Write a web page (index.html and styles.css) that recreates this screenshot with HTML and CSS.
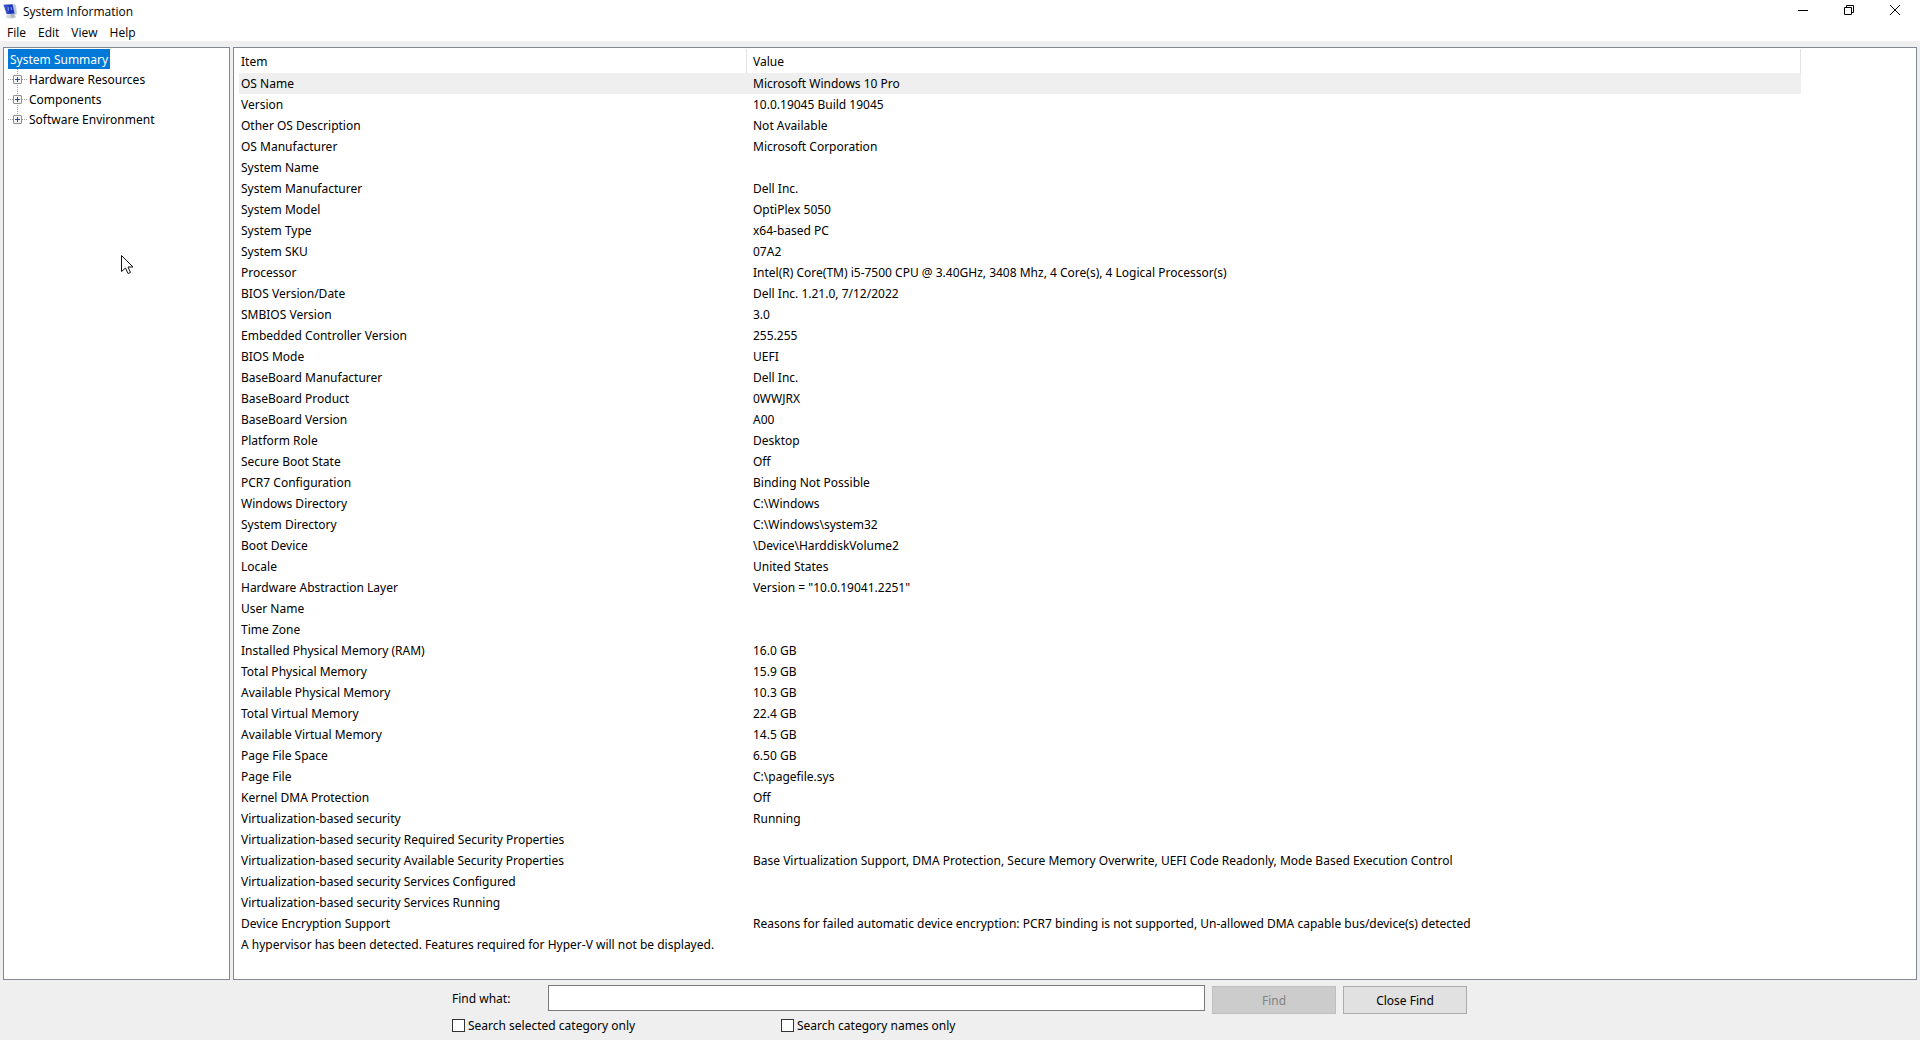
FILE: index.html
```html
<!DOCTYPE html>
<html lang="en">
<head>
  <meta charset="UTF-8" />
  <meta name="viewport" content="width=device-width, initial-scale=1" />
  <title>System Information</title>
  <link rel="stylesheet" href="styles.css">
</head>
<body>

<!-- Title bar -->
<header class="titlebar">
  <svg class="app-icon" width="16" height="18" viewBox="0 0 16 18" aria-hidden="true">
    <ellipse cx="9" cy="14.500" rx="5" ry="2" fill="#d4d7db"/>
    <path d="M8 11h4l1 4-4 1z" fill="#b4b9c0"/>
    <path d="M11 2l3 1 1 9-3 1z" fill="#c3c9d6"/>
    <path d="M1 2.500l10-.5 2.500 10-9 .5z" fill="#a9b6dc"/>
    <path d="M2 3l8.500-.5 2 9-7.500.5z" fill="#1c35b8"/>
    <path d="M2 3l3-.3 2 9-2 .3z" fill="#3450cc"/>
    <path d="M6 4.500l.5 4M9 5l.5 3" stroke="#93a8f0" fill="none"/>
  </svg>
  <h1>System Information</h1>
  <div class="window-buttons">
    <button aria-label="Minimize"><svg width="10" height="10"><path d="M0 5.5h10" stroke="#000"/></svg></button>
    <button aria-label="Restore"><svg width="10" height="10"><path d="M.5 2.5h7v7h-7zM2.5 2.5v-2h7v7h-2" fill="none" stroke="#000"/></svg></button>
    <button aria-label="Close"><svg width="10" height="10"><path d="M0 0l10 10M10 0l-10 10" stroke="#000"/></svg></button>
  </div>
</header>

<nav class="menubar">
  <button>File</button>
  <button>Edit</button>
  <button>View</button>
  <button>Help</button>
</nav>

<div class="panes">
  <!-- Category tree -->
  <aside class="tree">
    <a class="selected" href="#summary">System Summary</a>
    <ul>
      <li><button class="expand" aria-label="Expand Hardware Resources"></button><a href="#hardware">Hardware Resources</a></li>
      <li><button class="expand" aria-label="Expand Components"></button><a href="#components">Components</a></li>
      <li><button class="expand" aria-label="Expand Software Environment"></button><a href="#software">Software Environment</a></li>
    </ul>
  </aside>

  <!-- Details list -->
  <main class="details">
    <table>
      <colgroup><col class="col-item"><col class="col-value"></colgroup>
      <thead>
        <tr><th>Item</th><th>Value</th></tr>
      </thead>
      <tbody>
        <tr class="current"><td>OS Name</td><td>Microsoft Windows 10 Pro</td></tr>
        <tr><td>Version</td><td>10.0.19045 Build 19045</td></tr>
        <tr><td>Other OS Description</td><td>Not Available</td></tr>
        <tr><td>OS Manufacturer</td><td>Microsoft Corporation</td></tr>
        <tr><td>System Name</td><td></td></tr>
        <tr><td>System Manufacturer</td><td>Dell Inc.</td></tr>
        <tr><td>System Model</td><td>OptiPlex 5050</td></tr>
        <tr><td>System Type</td><td>x64-based PC</td></tr>
        <tr><td>System SKU</td><td>07A2</td></tr>
        <tr><td>Processor</td><td>Intel(R) Core(TM) i5-7500 CPU @ 3.40GHz, 3408 Mhz, 4 Core(s), 4 Logical Processor(s)</td></tr>
        <tr><td>BIOS Version/Date</td><td>Dell Inc. 1.21.0, 7/12/2022</td></tr>
        <tr><td>SMBIOS Version</td><td>3.0</td></tr>
        <tr><td>Embedded Controller Version</td><td>255.255</td></tr>
        <tr><td>BIOS Mode</td><td>UEFI</td></tr>
        <tr><td>BaseBoard Manufacturer</td><td>Dell Inc.</td></tr>
        <tr><td>BaseBoard Product</td><td>0WWJRX</td></tr>
        <tr><td>BaseBoard Version</td><td>A00</td></tr>
        <tr><td>Platform Role</td><td>Desktop</td></tr>
        <tr><td>Secure Boot State</td><td>Off</td></tr>
        <tr><td>PCR7 Configuration</td><td>Binding Not Possible</td></tr>
        <tr><td>Windows Directory</td><td>C:\Windows</td></tr>
        <tr><td>System Directory</td><td>C:\Windows\system32</td></tr>
        <tr><td>Boot Device</td><td>\Device\HarddiskVolume2</td></tr>
        <tr><td>Locale</td><td>United States</td></tr>
        <tr><td>Hardware Abstraction Layer</td><td>Version = "10.0.19041.2251"</td></tr>
        <tr><td>User Name</td><td></td></tr>
        <tr><td>Time Zone</td><td></td></tr>
        <tr><td>Installed Physical Memory (RAM)</td><td>16.0 GB</td></tr>
        <tr><td>Total Physical Memory</td><td>15.9 GB</td></tr>
        <tr><td>Available Physical Memory</td><td>10.3 GB</td></tr>
        <tr><td>Total Virtual Memory</td><td>22.4 GB</td></tr>
        <tr><td>Available Virtual Memory</td><td>14.5 GB</td></tr>
        <tr><td>Page File Space</td><td>6.50 GB</td></tr>
        <tr><td>Page File</td><td>C:\pagefile.sys</td></tr>
        <tr><td>Kernel DMA Protection</td><td>Off</td></tr>
        <tr><td>Virtualization-based security</td><td>Running</td></tr>
        <tr><td>Virtualization-based security Required Security Properties</td><td></td></tr>
        <tr><td>Virtualization-based security Available Security Properties</td><td>Base Virtualization Support, DMA Protection, Secure Memory Overwrite, UEFI Code Readonly, Mode Based Execution Control</td></tr>
        <tr><td>Virtualization-based security Services Configured</td><td></td></tr>
        <tr><td>Virtualization-based security Services Running</td><td></td></tr>
        <tr><td>Device Encryption Support</td><td>Reasons for failed automatic device encryption: PCR7 binding is not supported, Un-allowed DMA capable bus/device(s) detected</td></tr>
        <tr><td>A hypervisor has been detected. Features required for Hyper-V will not be displayed.</td><td></td></tr>
      </tbody>
    </table>
  </main>
</div>

<!-- Find bar -->
<form class="find">
  <div class="find-row">
    <label class="find-label" for="find-what">Find what:</label>
    <input type="text" id="find-what">
    <button type="button" disabled>Find</button>
    <button type="button">Close Find</button>
  </div>
  <div class="find-options">
    <label><input type="checkbox">Search selected category only</label>
    <label><input type="checkbox">Search category names only</label>
  </div>
</form>

<!-- Mouse pointer -->
<svg class="pointer" width="13" height="20" viewBox="0 0 13 20" aria-hidden="true">
  <path d="M.5.5v16l4-3.500 2.500 5.500 2.500-1-2.500-5.500h5z" fill="#fff" stroke="#111"/>
</svg>

</body>
</html>
```
FILE: styles.css
```css
* {
  box-sizing: border-box;
}

body {
  margin: 0;
  height: 100vh;
  display: flex;
  flex-direction: column;
  background: #efefef;
  color: #000;
  font-family: "Noto Sans", "Open Sans", sans-serif;
  font-size: 12px;
  overflow: hidden;
}

button,
input {
  font: inherit;
  color: inherit;
}

a {
  color: inherit;
  text-decoration: none;
}

.titlebar,
.menubar {
  display: flex;
  background: #fff;
  font-family: "Open Sans", sans-serif;
}

.titlebar {
  height: 24px;
  padding: 2px 2px 0;
}

.titlebar h1 {
  flex: 1;
  margin: 0 0 0 5px;
  font-size: 12px;
  font-weight: normal;
  line-height: 20px;
}

.window-buttons {
  display: flex;
}

.window-buttons button {
  display: flex;
  align-items: center;
  justify-content: center;
  width: 46px;
  height: 16px;
  padding: 0;
  border: none;
  background: none;
}

.menubar {
  height: 17px;
  padding-left: 1px;
}

.menubar button {
  padding: 0 6px;
  border: none;
  background: none;
  line-height: 17px;
}

.panes {
  flex: 1;
  display: flex;
  gap: 3px;
  min-height: 0;
  padding: 6px 3px 0;
}

.tree,
.details {
  background: #fff;
  border: 1px solid #828790;
}

.tree {
  width: 227px;
  padding: 1px 4px;
  line-height: 20px;
}

.tree a {
  display: block;
  height: 20px;
  padding: 1px 2px 0;
}

.tree .selected {
  width: fit-content;
  background: #0078d7;
  color: #fff;
}

.tree ul {
  margin: 0;
  padding: 0;
  list-style: none;
}

.tree li {
  display: flex;
  align-items: center;
  height: 20px;
  padding-left: 5px;
  background:
    linear-gradient(90deg, #a0a0a0 50%, transparent 50%) 14px 10px / 2px 1px repeat-x,
    repeating-linear-gradient(#a0a0a0 0 1px, transparent 1px 2px) 9px 0 / 1px 100% no-repeat;
}

.tree li:last-child {
  background:
    linear-gradient(90deg, #a0a0a0 50%, transparent 50%) 14px 10px / 2px 1px repeat-x,
    repeating-linear-gradient(#a0a0a0 0 1px, transparent 1px 2px) 9px 0 / 1px 10px no-repeat;
}

.tree li a {
  flex: 1;
  margin-left: 5px;
  background: #fff;
}

.expand {
  width: 9px;
  height: 9px;
  padding: 0;
  border: 1px solid #919191;
  border-radius: 1px;
  background:
    linear-gradient(#2c4a94, #2c4a94) center / 5px 1px no-repeat,
    linear-gradient(#2c4a94, #2c4a94) center / 1px 5px no-repeat,
    #f5f5f5;
}

.details {
  flex: 1;
  min-width: 0;
  padding: 1px 0 0 5px;
  overflow: hidden;
}

table {
  width: 1562px;
  table-layout: fixed;
  border-collapse: collapse;
}

.col-item {
  width: 508px;
}

th,
td {
  height: 21px;
  padding: 1px 2px 0;
  font-weight: normal;
  line-height: 20px;
  text-align: left;
  white-space: nowrap;
}

th {
  height: 24px;
  background: linear-gradient(#e2e2e2, #e2e2e2) right / 1px 100% no-repeat;
}

th + th,
td + td {
  padding-left: 6px;
}

.current {
  background: #efefef;
}

.find {
  width: 1016px;
  max-width: 100%;
  height: 60px;
  margin: 0 auto;
  padding: 5px 1px 0 0;
}

.find-row {
  display: flex;
  gap: 7px;
}

.find-label {
  width: 89px;
  line-height: 28px;
}

.find-row input {
  flex: 1;
  min-width: 0;
  height: 26px;
  border: 1px solid #7a7a7a;
  background: #fff;
}

.find-row button {
  width: 124px;
  height: 28px;
  margin-top: 1px;
  padding: 0;
  border: 1px solid #adadad;
  background: #e1e1e1;
}

.find-row button:disabled {
  border-color: #bfbfbf;
  background: #ccc;
  color: #838383;
}

.find-options {
  display: flex;
}

.find-options label {
  display: flex;
  align-items: center;
  gap: 3px;
  width: 329px;
  height: 22px;
}

.find-options input {
  appearance: none;
  width: 13px;
  height: 13px;
  margin: 0;
  border: 1px solid #333;
  background: #fff;
}

.pointer {
  position: absolute;
  left: 121px;
  top: 255px;
}
```
